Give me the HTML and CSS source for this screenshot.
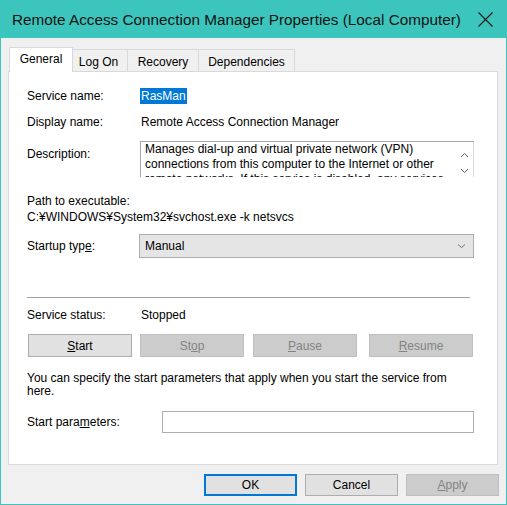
FILE: index.html
```html
<!DOCTYPE html>
<html>
<head>
<meta charset="utf-8">
<link rel="stylesheet" href="styles.css">
</head>
<body>
<div class="window">
  <div class="titlebar">
    <span class="title">Remote Access Connection Manager Properties (Local Computer)</span>
    <svg class="close" width="15" height="15" viewBox="0 0 15 15"><path d="M0.5 0.5 L14.5 14.5 M14.5 0.5 L0.5 14.5" stroke="#1a1a1a" stroke-width="1.1" fill="none"/></svg>
  </div>
  <div class="body">
    <div class="tabs">
      <div class="tab active t-general">General</div>
      <div class="tab t-logon">Log On</div>
      <div class="tab t-recovery">Recovery</div>
      <div class="tab t-deps">Dependencies</div>
    </div>
    <div class="panel">
      <div class="row row-name">
        <span class="label">Service name:</span>
        <span class="value"><span class="selected">RasMan</span></span>
      </div>
      <div class="row row-display">
        <span class="label">Display name:</span>
        <span class="value">Remote Access Connection Manager</span>
      </div>
      <div class="row row-desc">
        <span class="label label-desc">Description:</span>
        <div class="descbox">
          <div class="desctext">Manages dial-up and virtual private network (VPN)<br>connections from this computer to the Internet or other<br>remote networks. If this service is disabled, any services<br>that explicitly depend on it will fail to start.</div>
          <div class="scroll">
            <svg width="9" height="6" viewBox="0 0 9 6"><path d="M1 5 L4.5 1.5 L8 5" stroke="#606060" stroke-width="1" fill="none"/></svg>
            <svg width="9" height="6" viewBox="0 0 9 6"><path d="M1 1 L4.5 4.5 L8 1" stroke="#606060" stroke-width="1" fill="none"/></svg>
          </div>
        </div>
      </div>
      <div class="line path-label">Path to executable:</div>
      <div class="line path">C:¥WINDOWS¥System32¥svchost.exe -k netsvcs</div>
      <div class="row row-startup">
        <span class="label">Startup typ<u>e</u>:</span>
        <div class="combo">
          <span>Manual</span>
          <svg width="9" height="6" viewBox="0 0 9 6"><path d="M1 1.5 L4.5 4.5 L8 1.5" stroke="#6d6d6d" stroke-width="1" fill="none"/></svg>
        </div>
      </div>
      <div class="separator"></div>
      <div class="row row-status">
        <span class="label">Service status:</span>
        <span class="value">Stopped</span>
      </div>
      <div class="buttons">
        <div class="btn"><u>S</u>tart</div>
        <div class="btn disabled btn-stop">St<u>o</u>p</div>
        <div class="btn disabled btn-pause"><u>P</u>ause</div>
        <div class="btn disabled btn-resume"><u>R</u>esume</div>
      </div>
      <div class="info">You can specify the start parameters that apply when you start the service from<br>here.</div>
      <div class="row row-params">
        <span class="label">Start para<u>m</u>eters:</span>
        <div class="input"></div>
      </div>
    </div>
    <div class="footer">
      <div class="btn fbtn default">OK</div>
      <div class="btn fbtn">Cancel</div>
      <div class="btn fbtn disabled"><u>A</u>pply</div>
    </div>
  </div>
</div>
</body>
</html>
```

FILE: styles.css
```css
html, body {
  margin: 0;
  padding: 0;
  background: #f0f0f0;
}

.window {
  width: 507px;
  height: 505px;
  box-sizing: border-box;
  border: 1px solid #3cc5bc;
  border-top: none;
  background: #f0f0f0;
  display: flex;
  flex-direction: column;
  font-family: "Liberation Sans", Arial, sans-serif;
  font-size: 12px;
  color: #000;
}

.titlebar {
  height: 38px;
  background: #3cc5bc;
  display: flex;
  align-items: center;
  justify-content: space-between;
  padding: 0 13px 0 11px;
  flex: none;
}

.title {
  font-size: 15.3px;
  color: #121212;
  white-space: nowrap;
  margin-top: 1px;
}

.close {
  display: block;
  margin-top: 1px;
}

.body {
  flex: 1;
  padding: 9px 8px 0 7px;
  display: flex;
  flex-direction: column;
}

.tabs {
  display: flex;
  align-items: flex-end;
  height: 24px;
  padding-left: 1px;
}

.tab {
  height: 22px;
  box-sizing: border-box;
  border: 1px solid #d9d9d9;
  border-bottom: none;
  background: #f0f0f0;
  padding-top: 5px;
  line-height: 15px;
  text-align: center;
  white-space: nowrap;
  color: #000;
  margin-left: -1px;
}

.tab.active {
  height: 25px;
  margin-bottom: -1px;
  background: #fff;
  padding-top: 4px;
  position: relative;
  z-index: 1;
  margin-left: 0;
}

.t-general { width: 64px; }
.t-logon { width: 56px; padding-right: 3px; }
.t-recovery { width: 72px; }
.t-deps { width: 97px; }

.panel {
  width: 490px;
  height: 394px;
  box-sizing: border-box;
  border: 1px solid #d9d9d9;
  background: #fff;
  padding: 0 23px 0 18px;
  display: flex;
  flex-direction: column;
  flex: none;
}

.row {
  display: grid;
  grid-template-columns: 113px 1fr;
  align-items: center;
  line-height: 16px;
}

.line {
  line-height: 16px;
  white-space: nowrap;
}

.value {
  padding-left: 1px;
  white-space: nowrap;
}

.selected {
  background: #0078d7;
  color: #fff;
  padding: 0 1px;
  margin-left: -1px;
  display: inline-block;
  line-height: 16px;
}

.row-name { margin-top: 16px; }
.row-display { margin-top: 10px; }

.row-desc {
  margin-top: 11px;
  align-items: start;
}

.label-desc { padding-top: 5px; }

.descbox {
  height: 36px;
  box-sizing: border-box;
  border: 1px solid #a6a6a6;
  border-right-color: #dadada;
  border-bottom: none;
  display: flex;
  overflow: hidden;
}

.desctext {
  flex: 1;
  padding-left: 4px;
  line-height: 15px;
  white-space: nowrap;
  overflow: hidden;
}

.scroll {
  width: 17px;
  display: flex;
  flex-direction: column;
  align-items: center;
  padding-top: 10px;
  gap: 10px;
}

.scroll svg { display: block; }

.path-label { margin-top: 16px; }

.row-startup { margin-top: 9px; }

.combo {
  height: 24px;
  margin-left: -1px;
  box-sizing: border-box;
  border: 1px solid #adadad;
  background: #e5e5e5;
  display: flex;
  align-items: center;
  justify-content: space-between;
  padding: 0 7px 0 5px;
}

.combo svg { display: block; }

.separator {
  margin-top: 39px;
  height: 1px;
  width: 443px;
  background: #a0a0a0;
}

.row-status { margin-top: 9px; }

.buttons {
  margin-top: 11px;
  display: flex;
  padding-left: 1px;
}

.btn-stop { margin-left: 8px; }
.btn-pause { margin-left: 9px; }
.btn-resume { margin-left: 12px; }

.btn {
  width: 104px;
  height: 23px;
  box-sizing: border-box;
  border: 1px solid #adadad;
  background: #e1e1e1;
  display: flex;
  align-items: center;
  justify-content: center;
  color: #000;
}

.btn.disabled {
  background: #cccccc;
  border-color: #bfbfbf;
  color: #838383;
}

.info {
  margin-top: 15px;
  line-height: 13px;
  white-space: nowrap;
}

.row-params {
  margin-top: 13px;
  grid-template-columns: 135px 1fr;
}

.input {
  height: 22px;
  box-sizing: border-box;
  border: 1px solid #adadad;
  background: #fff;
}

.footer {
  margin-top: 9px;
  display: flex;
  justify-content: flex-end;
  gap: 8px;
  margin-right: -1px;
}

.fbtn {
  width: 93px;
  height: 22px;
}

.fbtn.default {
  border: 2px solid #0078d7;
}
```
